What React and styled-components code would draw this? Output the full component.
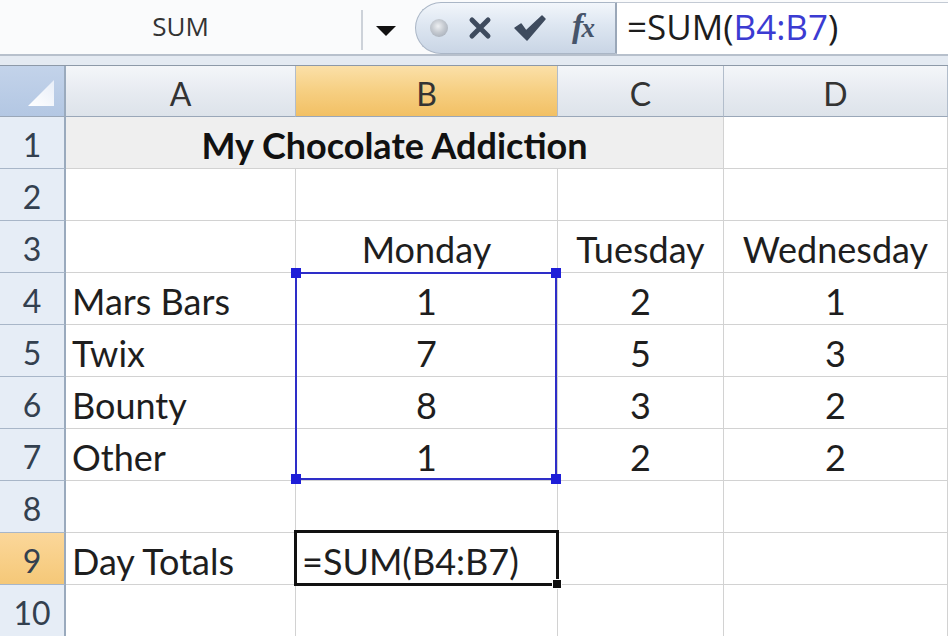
import styled, { createGlobalStyle } from "styled-components"

const GlobalStyle = createGlobalStyle`
    html, body {
        margin: 0;
        padding: 0;
        background: #ffffff;
        overflow: hidden;
    }
    body {
        font-family: Lato, "Open Sans", sans-serif;
        color: #222;
    }
`

const Window = styled.div`
    width: 948px;
    height: 636px;
    overflow: hidden;
    display: flex;
    flex-direction: column;
    background: #fff;
`

const FormulaBar = styled.div`
    display: flex;
    flex-shrink: 0;
    height: 56px;
    box-sizing: border-box;
    padding-top: 2px;
    background: #fafbfc;
    border-bottom: 2px solid #b7c0cc;
`

const NameBox = styled.div`
    width: 361px;
    display: flex;
    align-items: center;
    justify-content: center;
    font-family: "Open Sans", sans-serif;
    font-size: 26px;
    color: #333;
    padding-bottom: 4px;
`

const DropArea = styled.div`
    width: 54px;
    box-sizing: border-box;
    margin: 8px 0 4px;
    border-left: 2px solid #cdd2d9;
    display: flex;
    align-items: center;
    padding-left: 13px;
`

const Arrow = styled.span`
    width: 0;
    height: 0;
    border-left: 10px solid transparent;
    border-right: 10px solid transparent;
    border-top: 10px solid #111;
    margin-top: 2px;
`

const ButtonPill = styled.div`
    width: 202px;
    box-sizing: border-box;
    display: flex;
    align-items: center;
    border: 1px solid #aab6c6;
    border-right: 2px solid #9aa7b8;
    border-radius: 28px 0 0 28px;
    background: linear-gradient(#f2f6fb, #dde6f1 45%, #c9d5e5);
    padding-left: 12px;
`

const IconSlot = styled.div`
    width: ${(p) => p.$w}px;
    display: flex;
    justify-content: center;
    align-items: center;
`

const Fx = styled.span`
    font-family: "Liberation Serif", serif;
    font-style: italic;
    font-weight: bold;
    font-size: 34px;
    color: #46546a;
    letter-spacing: -2px;
    padding-bottom: 4px;

    small {
        font-size: 27px;
    }
`

const FormulaInput = styled.div`
    flex: 1;
    background: #fff;
    border-top: 1px solid #c3cad4;
    display: flex;
    align-items: center;
    padding-left: 10px;
    padding-bottom: 4px;
    font-family: "Open Sans", sans-serif;
    font-size: 35px;
    color: #1d1d1d;
`

const Ref = styled.span`
    color: #3b3bd2;
`

const Band = styled.div`
    flex-shrink: 0;
    height: 9px;
    background: #e4eaf2;
    border-bottom: 1px solid #8d99a8;
`

const Sheet = styled.div`
    flex-shrink: 0;
    display: grid;
    grid-template-columns: 66px 230px 262px 166px 224px;
    grid-template-rows: 51px repeat(10, 52px);
    font-size: 36px;
`

const Corner = styled.div`
    grid-row: 1;
    grid-column: 1;
    background: linear-gradient(#c3d3ea, #b3c7e3);
    border-right: 2px solid #9aaabd;
    border-bottom: 1px solid #9aa7b8;
    display: flex;
    align-items: flex-end;
    justify-content: flex-end;
    padding: 0 10px 10px 0;
`

const ColHeader = styled.div`
    grid-row: 1;
    grid-column: ${(p) => p.$c};
    display: flex;
    align-items: center;
    justify-content: center;
    padding-top: 4px;
    box-sizing: border-box;
    font-size: 32px;
    color: #333;
    border-right: 1px solid #b2bdcb;
    border-bottom: 1px solid #9aa7b8;
    background: ${(p) =>
        p.$active
            ? "linear-gradient(#fbe0a8, #f6cf82 50%, #f2c064)"
            : "linear-gradient(#f4f6f9, #e7ebf1 50%, #dde3ea)"};
`

const RowHeader = styled.div`
    grid-row: ${(p) => p.$r};
    grid-column: 1;
    display: flex;
    align-items: center;
    justify-content: center;
    padding-top: 4px;
    box-sizing: border-box;
    font-size: 32px;
    color: #33404f;
    border-right: 2px solid #9aaabd;
    border-bottom: 1px solid #a8b6c8;
    background: ${(p) =>
        p.$active ? "linear-gradient(#fbd79a, #f5c878)" : "#e6edf6"};
`

const Cell = styled.div`
    grid-row: ${(p) => p.$r};
    grid-column: ${(p) => p.$c};
    display: flex;
    align-items: center;
    justify-content: ${(p) => (p.$left ? "flex-start" : "center")};
    padding: 4px 6px 0;
    box-sizing: border-box;
    border-right: 1px solid #d2d2d2;
    border-bottom: 1px solid #d2d2d2;
    white-space: nowrap;
    color: #1e1e1e;
`

const TitleCell = styled(Cell)`
    grid-column: 2 / 5;
    background: #efefef;
    font-weight: bold;
    color: #111;
`

const Selection = styled.div`
    grid-column: 3;
    grid-row: 5 / 9;
    position: relative;
    margin: -1px 1px 1px -1px;
    border: 2px solid #2e2ec8;
    pointer-events: none;
`

const Handle = styled.span`
    position: absolute;
    width: 10px;
    height: 10px;
    background: #1f1fd8;
    ${(p) => (p.$top ? "top: -6px;" : "bottom: -6px;")}
    ${(p) => (p.$right ? "right: -6px;" : "left: -6px;")}
`

const ActiveBox = styled.div`
    grid-column: 3;
    grid-row: 10;
    position: relative;
    margin: -3px -1px -1px -2px;
    border: 3px solid #111;
    pointer-events: none;
`

const FillHandle = styled.span`
    position: absolute;
    right: -6px;
    bottom: -6px;
    width: 8px;
    height: 8px;
    background: #111;
    border: 1px solid #fff;
`

const rows = [
    { n: 2, cells: ["", "", "", ""] },
    { n: 3, cells: ["", "Monday", "Tuesday", "Wednesday"] },
    { n: 4, cells: ["Mars Bars", "1", "2", "1"] },
    { n: 5, cells: ["Twix", "7", "5", "3"] },
    { n: 6, cells: ["Bounty", "8", "3", "2"] },
    { n: 7, cells: ["Other", "1", "2", "2"] },
    { n: 8, cells: ["", "", "", ""] },
    { n: 9, cells: ["Day Totals", "=SUM(B4:B7)", "", ""] },
    { n: 10, cells: ["", "", "", ""] },
]

const columns = ["A", "B", "C", "D"]

function CancelIcon() {
    return (
        <svg width="26" height="26" viewBox="0 0 26 26">
            <path d="M5 5 L21 21 M21 5 L5 21" stroke="#3e4b5e" strokeWidth="5" strokeLinecap="round" fill="none" />
        </svg>
    )
}

function EnterIcon() {
    return (
        <svg width="34" height="28" viewBox="0 0 34 28">
            <polygon
                points="2,14 8,10 13,17 29,2 32,5 14,26"
                fill="#3e4b5e"
                stroke="#3e4b5e"
                strokeWidth="1.5"
                strokeLinejoin="round"
            />
        </svg>
    )
}

function DisabledDot() {
    return (
        <svg width="20" height="20" viewBox="0 0 20 20">
            <defs>
                <radialGradient id="dot" cx="45%" cy="40%" r="60%">
                    <stop offset="0%" stopColor="#eef0f3" />
                    <stop offset="60%" stopColor="#c4c9d0" />
                    <stop offset="100%" stopColor="#aeb5bf" />
                </radialGradient>
            </defs>
            <circle cx="10" cy="10" r="9" fill="url(#dot)" />
        </svg>
    )
}

function CornerTriangle() {
    return (
        <svg width="26" height="26" viewBox="0 0 26 26">
            <defs>
                <linearGradient id="tri" x1="0" y1="1" x2="1" y2="0">
                    <stop offset="0%" stopColor="#ffffff" />
                    <stop offset="100%" stopColor="#e8eef8" />
                </linearGradient>
            </defs>
            <polygon points="26,0 26,26 0,26" fill="url(#tri)" />
        </svg>
    )
}

export default function App() {
    return (
        <Window>
            <GlobalStyle />
            <FormulaBar>
                <NameBox>SUM</NameBox>
                <DropArea>
                    <Arrow />
                </DropArea>
                <ButtonPill>
                    <IconSlot $w={22}>
                        <DisabledDot />
                    </IconSlot>
                    <IconSlot $w={62}>
                        <CancelIcon />
                    </IconSlot>
                    <IconSlot $w={40}>
                        <EnterIcon />
                    </IconSlot>
                    <IconSlot $w={66}>
                        <Fx>
                            f<small>x</small>
                        </Fx>
                    </IconSlot>
                </ButtonPill>
                <FormulaInput>
                    =SUM(<Ref>B4:B7</Ref>)
                </FormulaInput>
            </FormulaBar>
            <Band />
            <Sheet>
                <Corner>
                    <CornerTriangle />
                </Corner>
                {columns.map((c, i) => (
                    <ColHeader key={c} $c={i + 2} $active={c === "B"}>
                        {c}
                    </ColHeader>
                ))}

                <RowHeader $r={2}>1</RowHeader>
                <TitleCell $r={2}>My Chocolate Addiction</TitleCell>
                <Cell $r={2} $c={5} />

                {rows.map((r) => [
                    <RowHeader key={"h" + r.n} $r={r.n + 1} $active={r.n === 9}>
                        {r.n}
                    </RowHeader>,
                    ...r.cells.map((c, i) => (
                        <Cell key={r.n + "-" + i} $r={r.n + 1} $c={i + 2} $left={i === 0 || (r.n === 9 && i === 1)}>
                            {c}
                        </Cell>
                    )),
                ])}

                <Selection>
                    <Handle $top />
                    <Handle $top $right />
                    <Handle />
                    <Handle $right />
                </Selection>
                <ActiveBox>
                    <FillHandle />
                </ActiveBox>
            </Sheet>
        </Window>
    )
}
